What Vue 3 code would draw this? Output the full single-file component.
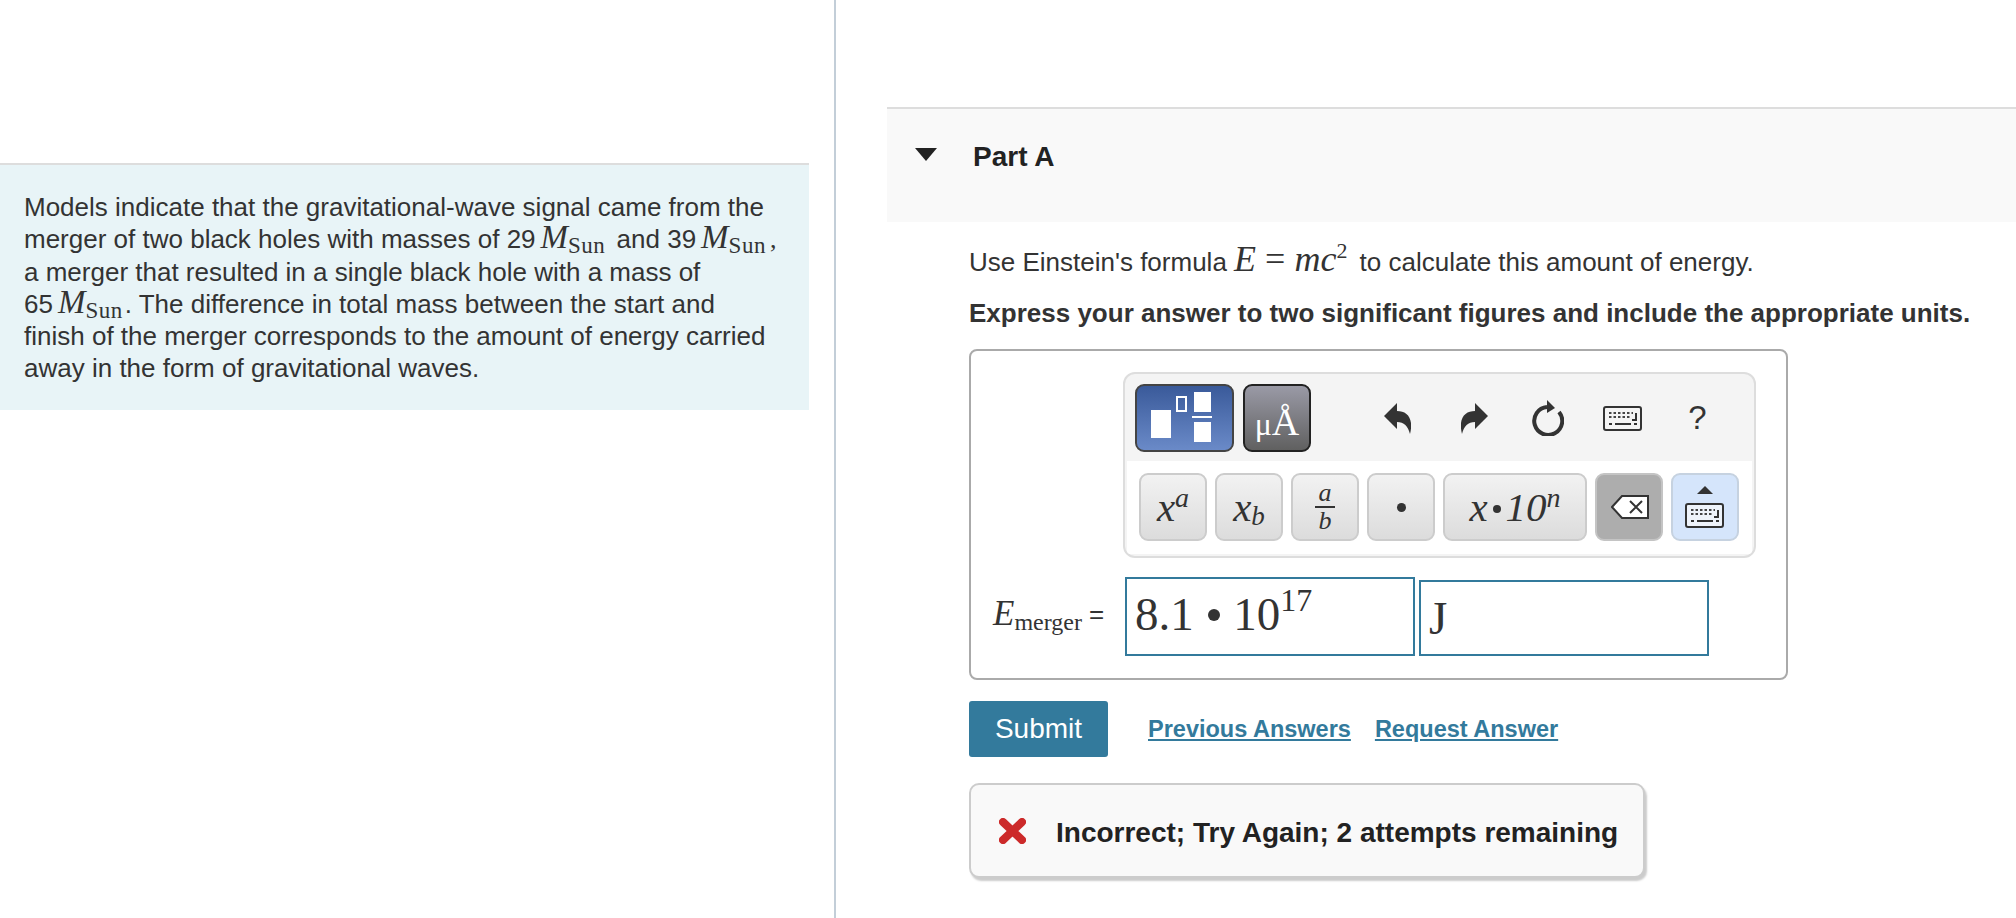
<template>
  <div class="page">
    <div class="left">
      <div class="intro">
        Models indicate that the gravitational-wave signal came from the<br>
        merger of two black holes with masses of 29<span class="m"><i>M</i><sub>Sun</sub></span> and 39<span class="m"><i>M</i><sub>Sun</sub></span><span class="comma">,</span><br>
        a merger that resulted in a single black hole with a mass of<br>
        65<span class="m tight"><i>M</i><sub>Sun</sub></span>. The difference in total mass between the start and<br>
        finish of the merger corresponds to the amount of energy carried<br>
        away in the form of gravitational waves.
      </div>
    </div>

    <div class="right">
      <div class="part-head">
        <span class="caret"></span>
        <span class="part-title">Part A</span>
      </div>

      <div class="part-body">
        <p class="formula">Use Einstein's formula <span class="eq"><i>E</i> = <i>mc</i><sup>2</sup></span> to calculate this amount of energy.</p>
        <p class="instr">Express your answer to two significant figures and include the appropriate units.</p>

        <div class="answer-box">
          <div class="toolbar">
            <div class="tool-top">
              <button class="tpl-btn">
                <svg width="99" height="68" viewBox="0 0 99 68">
                  <rect x="16" y="26" width="20" height="28" fill="#fff" />
                  <rect x="42" y="13" width="9" height="14" fill="none" stroke="#fff" stroke-width="2" />
                  <rect x="59" y="8" width="17" height="20" fill="#fff" />
                  <rect x="57" y="32" width="20" height="2" fill="#fff" />
                  <rect x="59" y="38" width="17" height="20" fill="#fff" />
                </svg>
              </button>
              <button class="sym-btn"><span class="mu">μ</span>Å</button>
              <div class="tool-icons">
                <span class="slot">
                  <svg width="27" height="31" viewBox="0 0 27 31"><path d="M0 13 13 0V8C23 8 30 15 26 31 24 23 20 19 13 19V26Z" fill="#333" /></svg>
                </span>
                <span class="slot redo">
                  <svg width="27" height="31" viewBox="0 0 27 31"><path d="M27 13 14 0V8C4 8-3 15 1 31 3 23 7 19 14 19V26Z" fill="#333" /></svg>
                </span>
                <span class="slot">
                  <svg width="32" height="36" viewBox="0 0 32 36">
                    <path d="M27 12A14 14 0 1 1 15 7" fill="none" stroke="#333" stroke-width="4" />
                    <path d="M15 0 23 8 15 13Z" fill="#333" />
                  </svg>
                </span>
                <span class="slot">
                  <svg width="40" height="25" viewBox="0 0 40 25">
                    <rect x="1" y="1" width="37" height="23" rx="2" fill="#f4f4f4" stroke="#333" stroke-width="2" />
                    <path d="M6 7h24M6 11h22" stroke="#444" stroke-width="2" stroke-dasharray="2.5 2" fill="none" />
                    <path d="M6 18h3M12 18h16M31 18h3" stroke="#333" stroke-width="2" fill="none" />
                    <path d="M33 7v7h-4" stroke="#333" stroke-width="2" fill="none" />
                  </svg>
                </span>
                <span class="slot help">?</span>
              </div>
            </div>
            <div class="tool-bottom">
              <button class="key"><span class="kx">x<sup>a</sup></span></button>
              <button class="key"><span class="kx">x<sub>b</sub></span></button>
              <button class="key frac"><i>a</i><span class="bar"></span><i>b</i></button>
              <button class="key"><span class="dot"></span></button>
              <button class="key wide"><span class="kx">x<span class="dot small"></span>10<sup>n</sup></span></button>
              <button class="key del">
                <svg width="38" height="24" viewBox="0 0 38 24">
                  <path d="M37 1H11L1 12 11 23H37Z" fill="#fff" stroke="#333" stroke-width="2" />
                  <path d="M19 6 31 18M31 6 19 18" stroke="#333" stroke-width="2" />
                </svg>
              </button>
              <button class="key kb">
                <svg width="40" height="42" viewBox="0 0 40 42">
                  <path d="M20 0 28 8H12Z" fill="#333" />
                  <rect x="1" y="18" width="37" height="23" rx="2" fill="#eef3fa" stroke="#333" stroke-width="2" />
                  <path d="M6 24h24M6 28h22" stroke="#444" stroke-width="2" stroke-dasharray="2.5 2" fill="none" />
                  <path d="M6 35h3M12 35h16M31 35h3" stroke="#333" stroke-width="2" fill="none" />
                  <path d="M33 24v7h-4" stroke="#333" stroke-width="2" fill="none" />
                </svg>
              </button>
            </div>
          </div>

          <div class="answer-row">
            <div class="answer-label"><i>E</i><sub>merger</sub><span class="equals">=</span></div>
            <div class="input value">8.1 <span class="bullet"></span> 10<sup>17</sup></div>
            <div class="input unit">J</div>
          </div>
        </div>

        <div class="actions">
          <button class="submit">Submit</button>
          <a class="link first">Previous Answers</a>
          <a class="link">Request Answer</a>
        </div>

        <div class="feedback">
          <svg class="cross" width="27" height="26" viewBox="0 0 27 26">
            <path d="M4 4 23 22M23 4 4 22" stroke="#cc2a2a" stroke-width="8" stroke-linecap="round" />
          </svg>
          <span>Incorrect; Try Again; 2 attempts remaining</span>
        </div>
      </div>
    </div>
  </div>
</template>

<script setup>
</script>

<style scoped>
.page {
  display: flex; height: 918px; overflow: hidden; background: #fff; color: #333;
  font-family: "Liberation Sans", Arial, sans-serif;
}
.left { width: 834px; flex: none; border-right: 2px solid #c3ced8; padding-top: 163px; box-sizing: content-box; }
.intro {
  width: 809px; box-sizing: border-box; height: 247px; background: #e8f4f7; border-top: 2px solid #ddd;
  padding: 26px 0 0 24px; font-size: 26px; line-height: 32px; white-space: nowrap;
}
.m { font-family: "Liberation Serif", serif; font-size: 33px; line-height: 0; margin: 0 4px 0 5px; }
.m.tight { margin-right: 2px; }
.m sub { font-size: 23px; line-height: 0; vertical-align: -5px; letter-spacing: 0.5px; }
.comma { font-family: "Liberation Serif", serif; }

.right { flex: 1; padding: 107px 0 0 51px; min-width: 0; }
.part-head {
  height: 115px; box-sizing: border-box; background: #f9f9f9; border-top: 2px solid #ddd;
  display: flex; align-items: flex-start; padding: 30px 0 0 28px;
}
.caret { width: 0; height: 0; border-left: 11px solid transparent; border-right: 11px solid transparent; border-top: 13px solid #222; margin: 9px 36px 0 0; }
.part-title { font-weight: 700; font-size: 28px; line-height: 35px; color: #222; }

.part-body { padding-left: 82px; }
p { margin: 0; line-height: 32px; white-space: nowrap; }
.formula { font-size: 26px; padding-top: 24px; }
.eq { font-family: "Liberation Serif", serif; font-size: 36px; line-height: 0; margin-right: 5px; }
.eq sup { font-size: 22px; line-height: 0; }
.instr { font-size: 26px; font-weight: 700; margin-top: 19px; }

.answer-box {
  width: 819px; height: 331px; box-sizing: border-box; margin-top: 20px;
  border: 2px solid #aaa; border-radius: 8px; padding: 21px 0 0 152px; position: relative;
}
.toolbar { width: 633px; height: 186px; box-sizing: border-box; border: 2px solid #ddd; border-radius: 12px; background: #f4f4f4; overflow: hidden; }
.tool-top { height: 87px; display: flex; align-items: flex-start; padding: 10px 0 0 10px; box-sizing: border-box; }
button { font-family: inherit; padding: 0; box-sizing: border-box; }
.tpl-btn {
  width: 99px; height: 68px; border: 2px solid #444; border-radius: 9px; display: block; overflow: hidden;
  background: linear-gradient(#3a5a9a, #6a8ac8);
}
.tpl-btn svg { display: block; margin: -2px; }
.sym-btn {
  width: 68px; height: 68px; margin-left: 9px; border: 2px solid #222; border-radius: 9px;
  background: linear-gradient(#9a9aa6, #606060); color: #fff;
  font-family: "Liberation Serif", serif; font-size: 38px; line-height: 60px; padding-top: 6px; white-space: nowrap;
}
.mu { font-size: 32px; }
.tool-icons { display: flex; margin-left: 49px; height: 68px; align-items: center; }
.slot { width: 75px; display: flex; justify-content: center; align-items: center; }
.redo { padding-left: 3px; box-sizing: border-box; }
.help { font-size: 33px; color: #333; }

.tool-bottom { background: #fff; height: 93px; margin: 0 2px; display: flex; gap: 8px; padding: 12px 0 0 12px; box-sizing: border-box; }
.key {
  width: 68px; height: 68px; border: 2px solid #ccc; border-radius: 9px;
  background: linear-gradient(#f2f2f2, #dcdcdc); color: #333; font-family: "Liberation Serif", serif;
  display: flex; align-items: center; justify-content: center; flex-direction: column;
}
.kx { font-size: 41px; font-style: italic; line-height: 36px; display: inline-flex; align-items: center; }
.kx sup { font-size: 28px; line-height: 0; position: relative; top: -9px; }
.kx sub { font-size: 27px; line-height: 0; position: relative; top: 9px; }
.frac { font-size: 26px; line-height: 24px; }
.bar { width: 20px; height: 2px; background: #333; margin: 1px 0; }
.dot { width: 9px; height: 9px; border-radius: 50%; background: #333; display: inline-block; }
.dot.small { width: 8px; height: 8px; margin: 4px 5px 0; }
.wide { width: 144px; }
.del { background: #adadad; border-color: #c4c4c4; }
.del svg { margin-right: -1px; }
.kb { background: #d5e5fb; border-color: #c6d2e0; }

.answer-row { display: flex; align-items: flex-end; margin-top: 19px; margin-left: -130px; }
.answer-label {
  width: 132px; height: 76px; flex: none; box-sizing: border-box; white-space: nowrap;
  font-family: "Liberation Serif", serif; font-size: 35px; line-height: 68px; color: #333;
}
.answer-label sub { font-size: 24px; line-height: 0; vertical-align: -5px; }
.equals { font-family: "Liberation Sans", sans-serif; font-size: 26px; margin-left: 7px; vertical-align: 2px; }
.input {
  box-sizing: border-box; border: 2px solid #337a9c; width: 290px; flex: none; margin-right: 4px;
  font-family: "Liberation Serif", serif; font-size: 47px; color: #333; padding-left: 8px; white-space: nowrap;
}
.value { height: 79px; line-height: 70px; }
.unit { height: 76px; line-height: 73px; font-size: 47px; }
.value sup { font-size: 32px; line-height: 0; vertical-align: 19px; }
.bullet { display: inline-block; width: 12px; height: 12px; background: #333; border-radius: 50%; vertical-align: 9px; margin: 0 2px; }

.actions { display: flex; align-items: center; margin-top: 21px; }
.submit { width: 139px; height: 56px; background: #337a9c; color: #fff; border: none; border-radius: 3px; font-size: 28px; }
.link { color: #337a9c; font-weight: 700; font-size: 23.5px; text-decoration: underline; margin-left: 24px; }
.link.first { margin-left: 40px; }

.feedback {
  width: 676px; height: 95px; box-sizing: border-box; margin-top: 26px; border: 2px solid #ccc; border-radius: 10px;
  background: #f9f9f9; box-shadow: 2px 3px 2px #ccc; display: flex; align-items: center; padding: 5px 0 0 28px;
  font-weight: 700; font-size: 28px; color: #222; white-space: nowrap;
}
.cross { margin-right: 30px; flex: none; margin-top: -5px; }
</style>
